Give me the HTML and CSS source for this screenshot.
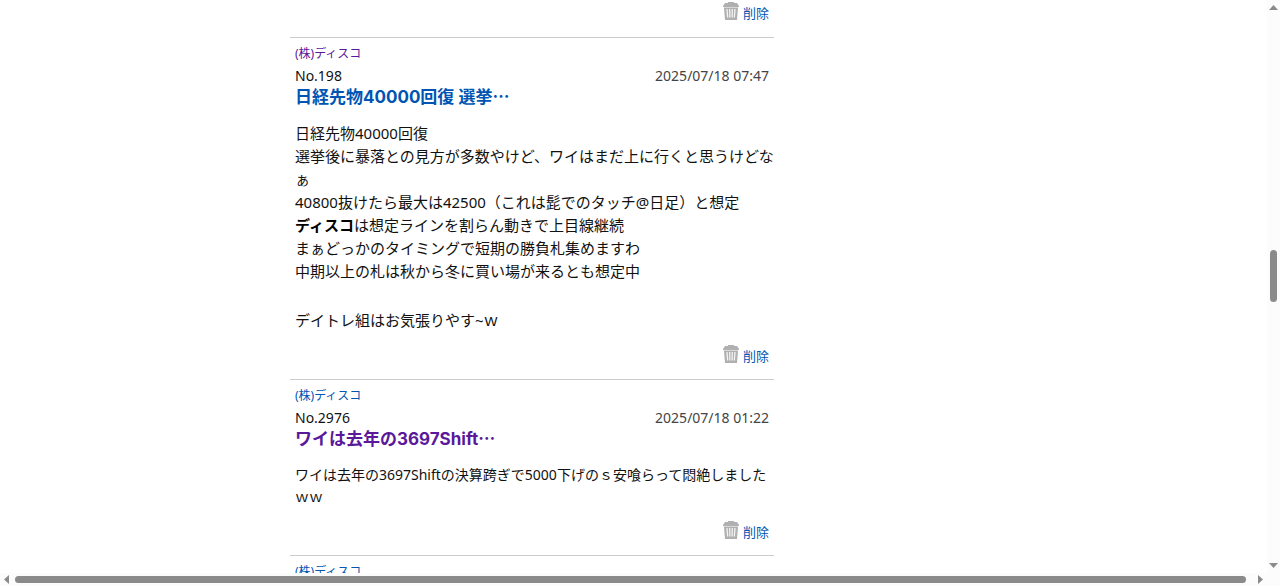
FILE: index.html
```
<!DOCTYPE html>
<html lang="ja">

<head>
    <meta charset="UTF-8">
    <meta name="viewport" content="width=device-width, initial-scale=1.0">
    <title>(株)ディスコ</title>
    <link rel="stylesheet" href="styles.css">
</head>

<body>
    <svg width="0" height="0" class="sprite" aria-hidden="true">
        <symbol id="trash" viewBox="0 0 16 18">
            <path fill="#b0b0b0" d="M5 0h6v1h3l2 3v1H0V4l2-3h3z" />
            <path fill="#d8d8d8" d="M1 5h14v1H1z" />
            <path fill="#b0b0b0" d="M1 6h14l-1 12H2z" />
            <path stroke="#f4f4f4" stroke-width="1.3" fill="none" d="M4 7l.7 8.500M6.700 7l.2 8.500M9.300 7l-.2 8.500M12 7l-.7 8.500" />
        </symbol>
    </svg>
    <div class="window">
        <div class="page">
            <main class="container">
                <div class="post_list">
                    <article class="post post_first">
                        <div class="post_footer">
                            <svg class="trash"><use href="#trash" /></svg>
                            <a href="#">削除</a>
                        </div>
                    </article>

                    <article class="post">
                        <div class="board"><a href="#" class="visited">(株)ディスコ</a></div>
                        <div class="post_info">
                            <span>No.198</span>
                            <time datetime="2025-07-18T07:47">2025/07/18 07:47</time>
                        </div>
                        <h2 class="post_title"><a href="#">日経先物40000回復 選挙<span class="more">…</span></a></h2>
                        <div class="post_body large">
                            <p>日経先物40000回復<br>
                                選挙後に暴落との見方が多数やけど、ワイはまだ上に行くと思うけどな<br>
                                ぁ<br>
                                40800抜けたら最大は42500（これは髭でのタッチ@日足）と想定<br>
                                <b>ディスコ</b>は想定ラインを割らん動きで上目線継続<br>
                                まぁどっかのタイミングで短期の勝負札集めますわ<br>
                                中期以上の札は秋から冬に買い場が来るとも想定中</p>
                            <p>デイトレ組はお気張りやす~ｗ</p>
                        </div>
                        <div class="post_footer">
                            <svg class="trash"><use href="#trash" /></svg>
                            <a href="#">削除</a>
                        </div>
                    </article>

                    <article class="post">
                        <div class="board"><a href="#">(株)ディスコ</a></div>
                        <div class="post_info">
                            <span>No.2976</span>
                            <time datetime="2025-07-18T01:22">2025/07/18 01:22</time>
                        </div>
                        <h2 class="post_title"><a href="#" class="visited">ワイは去年の3697Shift<span class="more">…</span></a></h2>
                        <div class="post_body">
                            <p>ワイは去年の3697Shiftの決算跨ぎで5000下げのｓ安喰らって悶絶しました<br>
                                ｗｗ</p>
                        </div>
                        <div class="post_footer">
                            <svg class="trash"><use href="#trash" /></svg>
                            <a href="#">削除</a>
                        </div>
                    </article>

                    <article class="post">
                        <div class="board"><a href="#">(株)ディスコ</a></div>
                    </article>
                </div>
            </main>
        </div>

        <div class="scroll_v">
            <i class="arrow up"></i>
            <div class="track_v"><div class="thumb_v"></div></div>
            <i class="arrow down"></i>
        </div>
        <div class="scroll_h">
            <i class="arrow left"></i>
            <div class="thumb_h"></div>
            <i class="arrow right"></i>
        </div>
    </div>
</body>

</html>
```
FILE: styles.css
```
body {
    font-family: "Noto Sans", "Noto Sans CJK JP", sans-serif;
    font-size: 14px;
    color: #111;
    margin: 0;
    background-color: #fff;
}

a {
    color: #0055b3;
    text-decoration: none;
}

a.visited {
    color: #5a189a;
}

.sprite {
    position: absolute;
}

/* 画面全体 */
.window {
    display: grid;
    grid-template-columns: 1fr 13px;
    grid-template-rows: 1fr 13px;
    height: 100vh;
}

.page {
    overflow: hidden;
    min-height: 0;
}

.container {
    max-width: 687px;
    margin: 0 auto;
}

.post_list {
    max-width: 484px;
}

/* 投稿 */
.post {
    padding: 5px 5px 12px;
    border-bottom: 1px solid #ccc;
}

.post_first {
    padding: 2px 5px 13px;
}

.board {
    font-size: 12px;
    line-height: 22px;
}

.post_info {
    display: flex;
    justify-content: space-between;
    line-height: 22px;
}

.post_info time {
    color: #444;
}

.post_title {
    margin: 0;
    font-family: Inter, "Noto Sans CJK JP", sans-serif;
    font-size: 17px;
    line-height: 18px;
}

.more {
    font-family: "Noto Sans CJK JP", sans-serif;
}

.post_body {
    margin: 16px 0 13px;
    line-height: 22px;
    white-space: nowrap;
}

.post_body.large {
    font-size: 15px;
    line-height: 23px;
}

.post_body p {
    margin: 0;
}

.post_body p + p {
    margin-top: 26px;
}

.post_body b {
    color: #000;
}

.post_footer {
    display: flex;
    justify-content: flex-end;
    gap: 4px;
    font-size: 13px;
    line-height: 22px;
}

.trash {
    width: 16px;
    height: 18px;
}

/* スクロールバー */
.scroll_v,
.scroll_h {
    display: flex;
    align-items: center;
    background-color: #fcfcfc;
}

.scroll_v {
    flex-direction: column;
    padding: 5px 0;
}

.scroll_h {
    grid-column: 1 / 3;
    gap: 6px;
    padding: 0 17px 0 4px;
}

.track_v {
    flex: 1;
    display: flex;
    flex-direction: column;
}

.track_v::before {
    content: "";
    flex: 47;
}

.track_v::after {
    content: "";
    flex: 51;
}

.thumb_v {
    width: 7px;
    height: 52px;
    border-radius: 4px;
    background-color: #8a8a8a;
}

.thumb_h {
    flex: 1;
    height: 7px;
    border-radius: 4px;
    background-color: #8a8a8a;
}

.arrow {
    width: 9px;
    height: 5px;
    background-color: #8a8a8a;
}

.arrow.up {
    clip-path: polygon(50% 0, 100% 100%, 0 100%);
}

.arrow.down {
    clip-path: polygon(0 0, 100% 0, 50% 100%);
}

.arrow.left,
.arrow.right {
    width: 5px;
    height: 9px;
}

.arrow.left {
    clip-path: polygon(0 50%, 100% 0, 100% 100%);
}

.arrow.right {
    margin-left: 6px;
    clip-path: polygon(0 0, 100% 50%, 0 100%);
}
```
